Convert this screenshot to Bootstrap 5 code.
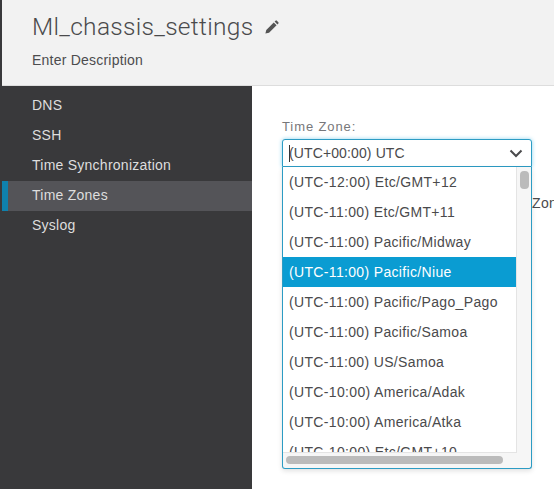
<!DOCTYPE html>
<html lang="en">
<head>
<meta charset="utf-8">
<title>Settings</title>
<link href="https://cdn.jsdelivr.net/npm/bootstrap@5.3.0/dist/css/bootstrap.min.css" rel="stylesheet">
<style>
html,body{height:100%;margin:0}
body{font-family:"Liberation Sans",Arial,sans-serif;background:#39393b;padding-left:2px;overflow:hidden;color:#555}
.shell{height:489px;background:#fff}
.head-bar{height:86px;background:#f2f2f2;padding:12px 0 0 30px;border-bottom:1px solid #ddd}
.head-title{font-family:"Roboto","Liberation Sans",sans-serif;font-size:24.5px;font-weight:300;line-height:30px;color:#4a4a4c;letter-spacing:.3px;margin:0}
.head-desc{font-size:14px;line-height:20px;color:#4c4c4e;margin-top:8px;letter-spacing:.22px}
.head-pencil{margin-left:11px}
.side-nav{width:250px;background:#39393b;padding-top:4px;flex:none}
.side-link{display:block;height:30px;line-height:30px;padding-left:30px;color:#dedede;font-size:14px;letter-spacing:.25px;text-decoration:none}
.side-link.on{background:#545458;border-left:6px solid #0f81ad;padding-left:24px;margin-top:1px;margin-bottom:-1px;line-height:28px}
.main-pane{min-width:0;overflow:hidden;padding:32px 0 0 30px;position:relative}
.tz-label{font-size:13px;line-height:18px;color:#77777a;letter-spacing:.9px;margin-bottom:4px}
.tz-combo{position:absolute;left:30px;top:53px;width:250px;z-index:2}
.tz-input{height:28px;border:1px solid #2c9cc4;border-radius:3px 3px 0 0;box-shadow:0 0 4px #8fd3ee;background:#fff;padding-left:6px;font-size:14px;line-height:26px;color:#4a4a4c;letter-spacing:.12px}
.tz-caret{width:1px;height:17px;background:#333;margin-right:-1px}
.tz-list{height:302px;border:1px solid #2c9cc4;border-top:0;border-radius:0 0 3px 3px;background:#f6f6f6;position:relative;overflow:hidden;box-shadow:0 2px 5px rgba(0,0,0,.12)}
.tz-view{width:234px;height:286px;background:#fff;overflow:hidden;border-right:1px solid #e4e4e4;border-bottom:1px solid #e4e4e4}
.tz-item{height:30px;line-height:30px;padding-left:6px;font-size:14px;letter-spacing:.34px;color:#4a4a4c;white-space:nowrap}
.tz-item.on{background:#0a9cd2;color:#fff}
.thumb-v{position:absolute;left:237px;top:4px;width:9px;height:18px;border-radius:4px;background:#bbb}
.thumb-h{position:absolute;left:3px;top:289px;width:217px;height:8px;border-radius:4px;background:#bbb}
.behind-text{margin:57px 0 0 250px;font-size:14px;line-height:20px;color:#4a4a4c;white-space:nowrap;letter-spacing:.34px}
</style>
</head>
<body>
<div class="shell d-flex flex-column">
  <header class="head-bar flex-shrink-0">
    <h1 class="head-title d-flex align-items-center">Ml_chassis_settings
      <svg class="head-pencil" width="15" height="15" viewBox="0 0 16 16" aria-hidden="true"><path fill="#555" d="M1.5 14.5l.9-3.9 8-8 3 3-8 8zM11.3 1.7l1-1a1 1 0 0 1 1.4 0l1.6 1.6a1 1 0 0 1 0 1.4l-1 1z"/></svg>
    </h1>
    <div class="head-desc">Enter Description</div>
  </header>
  <div class="d-flex flex-grow-1">
    <nav class="side-nav">
      <a class="side-link" href="#">DNS</a>
      <a class="side-link" href="#">SSH</a>
      <a class="side-link" href="#">Time Synchronization</a>
      <a class="side-link on" href="#">Time Zones</a>
      <a class="side-link" href="#">Syslog</a>
    </nav>
    <main class="main-pane flex-grow-1">
      <div class="tz-label">Time Zone:</div>
      <div class="behind-text">Zone</div>
      <div class="tz-combo">
        <div class="tz-input d-flex align-items-center">
          <span class="tz-caret"></span><span class="flex-grow-1">(UTC+00:00) UTC</span>
          <svg class="me-2" width="14" height="9" viewBox="0 0 14 9" aria-hidden="true"><path d="M1.5 1.5L7 7l5.5-5.5" fill="none" stroke="#4a4a4c" stroke-width="2"/></svg>
        </div>
        <div class="tz-list">
          <div class="tz-view">
            <div class="tz-item">(UTC-12:00) Etc/GMT+12</div>
            <div class="tz-item">(UTC-11:00) Etc/GMT+11</div>
            <div class="tz-item">(UTC-11:00) Pacific/Midway</div>
            <div class="tz-item on">(UTC-11:00) Pacific/Niue</div>
            <div class="tz-item">(UTC-11:00) Pacific/Pago_Pago</div>
            <div class="tz-item">(UTC-11:00) Pacific/Samoa</div>
            <div class="tz-item">(UTC-11:00) US/Samoa</div>
            <div class="tz-item">(UTC-10:00) America/Adak</div>
            <div class="tz-item">(UTC-10:00) America/Atka</div>
            <div class="tz-item">(UTC-10:00) Etc/GMT+10</div>
          </div>
          <div class="thumb-v"></div>
          <div class="thumb-h"></div>
        </div>
      </div>
    </main>
  </div>
</div>
<script src="https://cdn.jsdelivr.net/npm/bootstrap@5.3.0/dist/js/bootstrap.bundle.min.js"></script>
</body>
</html>
